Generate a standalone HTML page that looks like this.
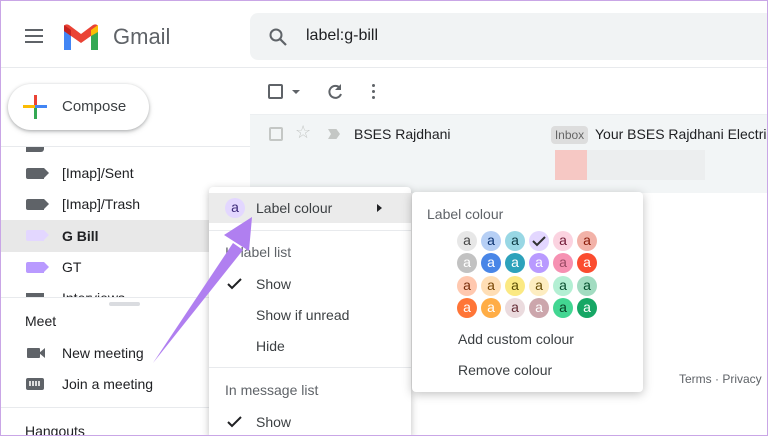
<!DOCTYPE html>
<html><head><meta charset="utf-8"><style>
*{margin:0;padding:0;box-sizing:border-box}
html,body{width:768px;height:436px;overflow:hidden}
body{background:#fff;font-family:"Liberation Sans",Arial,sans-serif;color:#202124;position:relative}
.a{position:absolute;white-space:nowrap}
.frame{position:absolute;left:0;top:0;width:768px;height:436px;border:1px solid #c9a6e6;pointer-events:none;z-index:50}
.lbl{position:absolute;left:26px;width:18px;height:11px;border-radius:2px 0 0 2px}
.lbl:after{content:"";position:absolute;right:-5px;top:0;border-left:5px solid currentColor;border-top:5.5px solid transparent;border-bottom:5.5px solid transparent}
.sb{font-size:14px;color:#202124;position:absolute;left:62px}
.m{font-size:14px;color:#3c4043;position:absolute}
.c{position:absolute;width:20px;height:20px;border-radius:50%;text-align:center;line-height:19px;font-size:14px}
</style></head><body>
<div class="a" style="left:25px;top:29px;width:18px;height:2px;background:#5f6368;box-shadow:0 6px 0 #5f6368,0 12px 0 #5f6368"></div>
<svg class="a" style="left:63px;top:22px" width="36" height="28" viewBox="0 0 36 28">
<rect x="1" y="5" width="7" height="23" fill="#4285f4"/>
<rect x="28" y="5" width="7" height="23" fill="#34a853"/>
<path d="M1 6 Q1 1 6 3 L18 12 L30 3 Q35 1 35 6 L35 9 L18 21 L1 9Z" fill="#ea4335"/>
<path d="M28 8 L35 3 L35 10 L28 14Z" fill="#fbbc04"/>
<path d="M1 3 L8 8 L8 14 L1 9Z" fill="#c5221f"/>
</svg>
<div class="a" style="left:113px;top:24px;font-size:22px;color:#5f6368">Gmail</div>
<div class="a" style="left:250px;top:13px;width:530px;height:47px;background:#f1f3f4;border-radius:8px"></div>
<svg class="a" style="left:268px;top:27px" width="20" height="20" viewBox="0 0 20 20"><circle cx="8" cy="8" r="5.5" fill="none" stroke="#5f6368" stroke-width="2"/><path d="M12 12l6 6" stroke="#5f6368" stroke-width="2.2"/></svg>
<div class="a" style="left:306px;top:27px;font-size:16px;color:#202124">label:g-bill</div>
<div class="a" style="left:0;top:67px;width:768px;height:1px;background:#e8eaed"></div>
<div class="a" style="left:8px;top:84px;width:141px;height:46px;border-radius:24px;background:#fff;box-shadow:0 1px 3px rgba(60,64,67,.35),0 2px 6px rgba(60,64,67,.15)"></div>
<div class="a" style="left:23px;top:105px;width:12px;height:3px;background:#fbbc04"></div>
<div class="a" style="left:35px;top:105px;width:12px;height:3px;background:#4285f4"></div>
<div class="a" style="left:34px;top:95px;width:3px;height:10px;background:#ea4335"></div>
<div class="a" style="left:34px;top:108px;width:3px;height:11px;background:#34a853"></div>
<div class="a" style="left:62px;top:98px;font-size:15px;color:#3c4043">Compose</div>
<div class="a" style="left:0;top:146px;width:250px;height:1px;background:#e8eaed"></div>
<div class="a" style="left:26px;top:147px;width:18px;height:5px;background:#5f6368;border-radius:0 0 3px 0"></div>
<div class="lbl" style="top:168px;background:#5f6368;color:#5f6368"></div><div class="sb" style="top:165px">[Imap]/Sent</div>
<div class="lbl" style="top:199px;background:#5f6368;color:#5f6368"></div><div class="sb" style="top:196px">[Imap]/Trash</div>
<div class="a" style="left:0;top:220px;width:250px;height:32px;background:#e8e8e8"></div>
<div class="lbl" style="top:230px;background:#e3d7ff;color:#e3d7ff"></div><div class="sb" style="top:228px;font-weight:bold">G Bill</div>
<div class="lbl" style="top:262px;background:#b99aff;color:#b99aff"></div><div class="sb" style="top:259px">GT</div>
<div class="a" style="left:26px;top:293px;width:18px;height:4px;background:#5f6368"></div>
<div class="sb" style="top:290px;height:7px;overflow:hidden">Interviews</div>
<div class="a" style="left:0;top:297px;width:250px;height:1px;background:#e8eaed"></div>
<div class="a" style="left:109px;top:302px;width:31px;height:4px;border-radius:2px;background:#dadce0"></div>
<div class="a" style="left:25px;top:313px;font-size:14px;color:#202124">Meet</div>
<div class="a" style="left:27px;top:348px;width:13px;height:10px;background:#5f6368;border-radius:1px"></div>
<div class="a" style="left:39px;top:348px;border-right:6px solid #5f6368;border-top:5px solid transparent;border-bottom:5px solid transparent"></div>
<div class="sb" style="top:345px">New meeting</div>
<div class="a" style="left:26px;top:378px;width:18px;height:12px;background:#5f6368;border-radius:2px"></div>
<div class="a" style="left:29px;top:381px;width:12px;height:5px;background:repeating-linear-gradient(90deg,#ddd 0 2px,transparent 2px 3px)"></div>
<div class="sb" style="top:376px">Join a meeting</div>
<div class="a" style="left:0;top:407px;width:250px;height:1px;background:#e8eaed"></div>
<div class="a" style="left:25px;top:423px;font-size:14px;color:#202124">Hangouts</div>
<div class="a" style="left:268px;top:84px;width:15px;height:15px;border:2px solid #5f6368;border-radius:2px"></div>
<div class="a" style="left:292px;top:90px;border-top:4px solid #5f6368;border-left:4px solid transparent;border-right:4px solid transparent"></div>
<svg class="a" style="left:325px;top:82px" width="20" height="20" viewBox="0 0 20 20"><path d="M15 6A6 6 0 1 0 16 12" fill="none" stroke="#5f6368" stroke-width="2"/><path d="M16 2v6h-6z" fill="#5f6368"/></svg>
<div class="a" style="left:372px;top:84px;width:3px;height:3px;background:#5f6368;border-radius:50%;box-shadow:0 6px 0 #5f6368,0 12px 0 #5f6368"></div>
<div class="a" style="left:250px;top:114px;width:518px;height:79px;background:#f2f5f6;border-top:1px solid #eceff1"></div>
<div class="a" style="left:269px;top:127px;width:14px;height:14px;border:2px solid #c4c7c5;border-radius:2px"></div>
<div class="a" style="left:295px;top:122px;font-size:18px;color:#c4c7c5">☆</div>
<div class="a" style="left:328px;top:129px;width:12px;height:10px;background:#c4c7c5;clip-path:polygon(0 0,70% 0,100% 50%,70% 100%,0 100%,25% 50%)"></div>
<div class="a" style="left:354px;top:126px;font-size:14px;color:#202124">BSES Rajdhani</div>
<div class="a" style="left:551px;top:126px;width:37px;height:18px;background:#ddd;border-radius:4px;font-size:12px;color:#666;text-align:center;line-height:18px">Inbox</div>
<div class="a" style="left:595px;top:126px;font-size:14px;color:#202124">Your BSES Rajdhani Electric</div>
<div class="a" style="left:555px;top:150px;width:32px;height:30px;background:#f6c8c4"></div>
<div class="a" style="left:587px;top:150px;width:118px;height:30px;background:#eceeef"></div>
<div class="a" style="left:679px;top:372px;font-size:12px;color:#5f6368">Terms · Privacy</div>
<div class="a" style="left:209px;top:187px;width:202px;height:249px;background:#fff;border-radius:4px 4px 0 0;box-shadow:0 2px 8px rgba(0,0,0,.25)"></div>
<div class="a" style="left:209px;top:193px;width:202px;height:30px;background:#ebebeb"></div>
<div class="c" style="left:225px;top:198px;background:#e3d7ff;color:#3d2a7a">a</div>
<div class="m" style="left:256px;top:200px">Label colour</div>
<div class="a" style="left:377px;top:204px;border-left:5px solid #202124;border-top:4px solid transparent;border-bottom:4px solid transparent"></div>
<div class="a" style="left:209px;top:230px;width:202px;height:1px;background:#e8eaed"></div>
<div class="m" style="left:225px;top:244px;color:#5f6368">In label list</div>
<svg class="a" style="left:227px;top:278px" width="16" height="12"><path d="M1 6l4 4 9-9" fill="none" stroke="#202124" stroke-width="2"/></svg>
<div class="m" style="left:256px;top:276px">Show</div>
<div class="m" style="left:256px;top:307px">Show if unread</div>
<div class="m" style="left:256px;top:338px">Hide</div>
<div class="a" style="left:209px;top:367px;width:202px;height:1px;background:#e8eaed"></div>
<div class="m" style="left:225px;top:382px;color:#5f6368">In message list</div>
<svg class="a" style="left:227px;top:416px" width="16" height="12"><path d="M1 6l4 4 9-9" fill="none" stroke="#202124" stroke-width="2"/></svg>
<div class="m" style="left:256px;top:414px">Show</div>
<div class="a" style="left:412px;top:192px;width:231px;height:200px;background:#fff;border-radius:4px;box-shadow:0 2px 10px rgba(0,0,0,.25)"></div>
<div class="m" style="left:427px;top:206px;color:#5f6368">Label colour</div>
<div class="c" style="left:457px;top:231px;background:#e7e7e7;color:#464646">a</div>
<div class="c" style="left:481px;top:231px;background:#b6cff5;color:#0d3472">a</div>
<div class="c" style="left:505px;top:231px;background:#98d7e4;color:#0d3b44">a</div>
<div class="c" style="left:529px;top:231px;background:#e3d7ff"><svg width="20" height="20"><path d="M4 10l4 4 8-8" fill="none" stroke="#333" stroke-width="2"/></svg></div>
<div class="c" style="left:553px;top:231px;background:#fbd3e0;color:#711a36">a</div>
<div class="c" style="left:577px;top:231px;background:#f2b2a8;color:#8a1c0a">a</div>
<div class="c" style="left:457px;top:253px;background:#c2c2c2;color:#fff">a</div>
<div class="c" style="left:481px;top:253px;background:#4986e7;color:#fff">a</div>
<div class="c" style="left:505px;top:253px;background:#2da2bb;color:#fff">a</div>
<div class="c" style="left:529px;top:253px;background:#b99aff;color:#fff">a</div>
<div class="c" style="left:553px;top:253px;background:#f691b2;color:#994a64">a</div>
<div class="c" style="left:577px;top:253px;background:#fb4c2f;color:#fff">a</div>
<div class="c" style="left:457px;top:276px;background:#ffc8af;color:#7a2e0b">a</div>
<div class="c" style="left:481px;top:276px;background:#ffdeb5;color:#7a4706">a</div>
<div class="c" style="left:505px;top:276px;background:#fbe983;color:#594c05">a</div>
<div class="c" style="left:529px;top:276px;background:#fdedc1;color:#684e07">a</div>
<div class="c" style="left:553px;top:276px;background:#b3efd3;color:#0b4f30">a</div>
<div class="c" style="left:577px;top:276px;background:#a2dcc1;color:#04502e">a</div>
<div class="c" style="left:457px;top:298px;background:#ff7537;color:#fff">a</div>
<div class="c" style="left:481px;top:298px;background:#ffad46;color:#fff">a</div>
<div class="c" style="left:505px;top:298px;background:#ebdbde;color:#662e37">a</div>
<div class="c" style="left:529px;top:298px;background:#cca6ac;color:#fff">a</div>
<div class="c" style="left:553px;top:298px;background:#42d692;color:#094228">a</div>
<div class="c" style="left:577px;top:298px;background:#16a765;color:#fff">a</div>
<div class="m" style="left:458px;top:331px">Add custom colour</div>
<div class="m" style="left:458px;top:362px">Remove colour</div>
<svg class="a" style="left:0;top:0;z-index:40" width="768" height="436"><polygon points="153,363 233,243 243,250" fill="#b07ff0"/><polygon points="252,217 224,235 249,251" fill="#b07ff0"/></svg>
<div class="frame"></div>
</body></html>
